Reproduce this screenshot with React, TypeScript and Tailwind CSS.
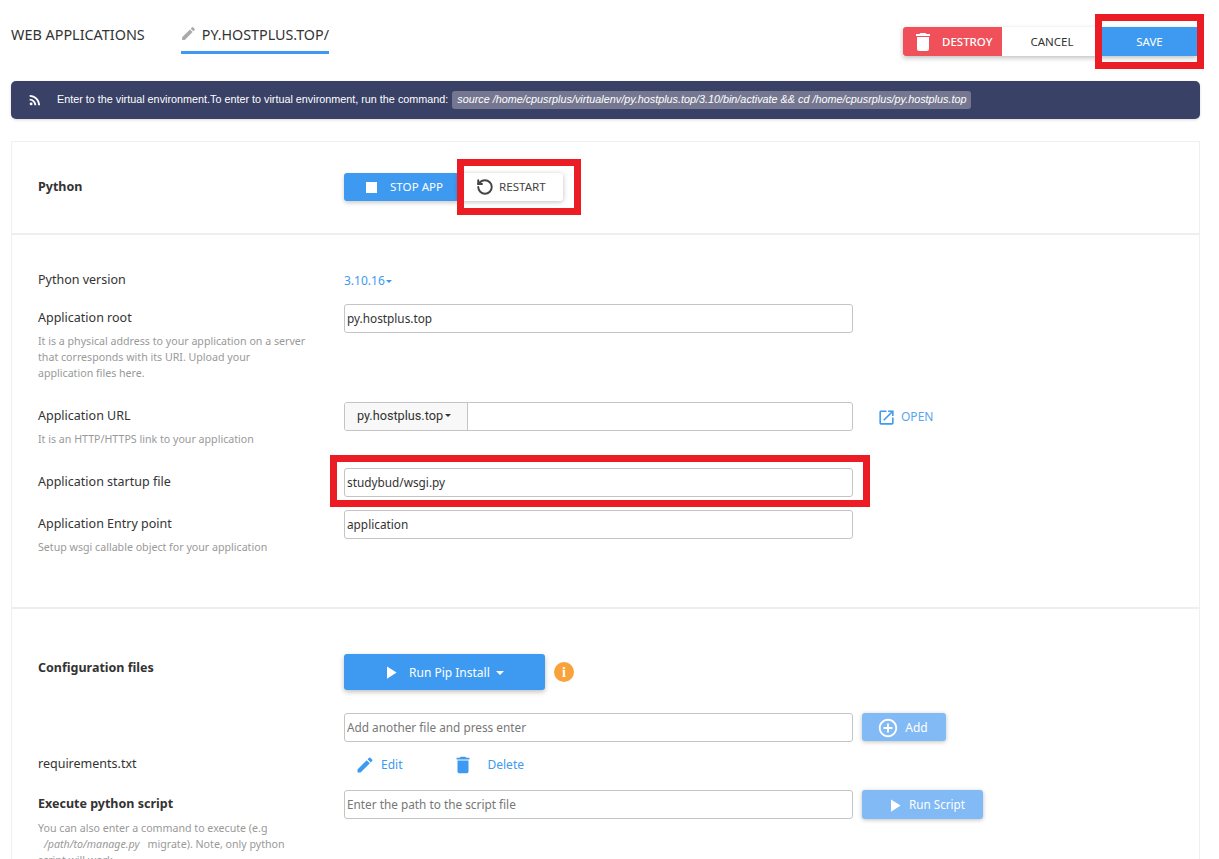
import { ReactNode } from 'react'
import { RotateCcw } from 'lucide-react'
import {
  MdAddCircleOutline,
  MdDelete,
  MdEdit,
  MdOpenInNew,
  MdPlayArrow,
  MdRssFeed,
} from 'react-icons/md'

const inputClass =
  'h-[29px] w-[509px] rounded-[3px] border border-[#c4c4c4] bg-white px-[2px] pb-px text-[11.8px] text-[#333] outline-none placeholder:text-[#777]'

// Red annotation frames that were drawn over the screenshot
function RedBox({ className }: { className: string }) {
  return <div className={`pointer-events-none absolute border-[7px] border-[#ec1c24] ${className}`} />
}

function Label({ children, bold }: { children: ReactNode; bold?: boolean }) {
  return <div className={`text-[12.5px] leading-[18px] text-[#333] ${bold ? 'font-bold' : ''}`}>{children}</div>
}

function Hint({ children }: { children: ReactNode }) {
  return <div className="mt-[6px] w-[274px] text-[10.65px] leading-[16px] text-[#999]">{children}</div>
}

export default function App() {
  return (
    <div className="relative h-[859px] overflow-hidden bg-white font-['Noto_Sans',sans-serif]">
      {/* Page header */}
      <div className="flex h-[81px] items-start pl-[11px] pr-[22px]">
        <div className="mt-[25px] text-[14.4px] leading-[20px] text-[#333]">WEB APPLICATIONS</div>
        <div className="ml-[36px] mt-[24px] flex h-[30px] w-[148px] items-start gap-[5px] border-b-[3px] border-[#3d9af0] pt-px text-[#333]">
          <MdEdit className="-ml-px size-[17px] shrink-0 text-[#aaa]" />
          <span className="whitespace-nowrap text-[14.3px] leading-[20px]">PY.HOSTPLUS.TOP/</span>
        </div>
        <div className="ml-auto mt-[27px] flex h-[29px] text-[11.5px] shadow-[0_2px_5px_rgba(0,0,0,0.25)]">
          <button className="flex w-[99px] items-center gap-[7px] rounded-l-[3px] bg-[#ef5059] pl-[8px] font-medium text-white">
            <MdDelete className="size-[24px]" />
            DESTROY
          </button>
          <button className="w-[100px] bg-white text-[#333]">CANCEL</button>
          <button className="w-[95px] bg-[#3d9af0] text-white">SAVE</button>
        </div>
      </div>

      {/* Virtual environment notice */}
      <div className="ml-[11px] mr-[19px] flex h-[38px] items-center rounded-[5px] bg-[#3a4166] pb-px font-['Liberation_Sans',sans-serif] text-[10.8px] text-white shadow-[0_1px_3px_rgba(0,0,0,0.15)]">
        <MdRssFeed className="ml-[16px] size-[16px]" />
        <span className="ml-[14px]">Enter to the virtual environment.To enter to virtual environment, run the command:</span>
        <code className="ml-[4px] flex h-[18px] items-center rounded-[3px] bg-[#74778f] px-[5px] font-['Liberation_Sans',sans-serif] text-[10.8px] italic">
          source /home/cpusrplus/virtualenv/py.hostplus.top/3.10/bin/activate &amp;&amp; cd /home/cpusrplus/py.hostplus.top
        </code>
      </div>

      {/* Application card */}
      <div className="ml-[11px] mr-[19px] mt-[22px] border border-b-0 border-[#f0f0f0]">
        <section className="flex h-[93px] border-b-2 border-[#eee] pl-[26px] pt-[31px]">
          <div className="w-[306px] pt-[5px]">
            <Label bold>Python</Label>
          </div>
          <div className="flex h-[28px] text-[11.6px]">
            <button className="flex w-[114px] items-center rounded-l-[3px] bg-[#3d9af0] pl-[22px] text-white shadow-[0_2px_4px_rgba(0,0,0,0.2)]">
              <span className="size-[11px] bg-white" />
              <span className="ml-[13px]">STOP APP</span>
            </button>
            <button className="flex w-[105px] items-center rounded-r-[3px] bg-white pl-[18px] text-[#444] shadow-[0_1px_5px_rgba(0,0,0,0.25)]">
              <RotateCcw className="size-[18px]" strokeWidth={2.6} />
              <span className="ml-[5px]">RESTART</span>
            </button>
          </div>
        </section>

        <section className="h-[374px] border-b-2 border-[#eee] pl-[26px] pt-[35px]">
          <div className="flex h-[34px]">
            <div className="w-[306px] pt-px">
              <Label>Python version</Label>
            </div>
            <div className="pt-[2px] text-[12px] leading-[18px] text-[#3d9af0]">
              3.10.16<span className="ml-px inline-block h-0 w-0 border-x-[3px] border-t-[3px] border-x-transparent border-t-[#3d9af0] align-middle" />
            </div>
          </div>
          <div className="flex h-[98px]">
            <div className="w-[306px] pt-[5px]">
              <Label>Application root</Label>
              <Hint>
                It is a physical address to your application on a server that corresponds with its URI. Upload your
                <br />
                application files here.
              </Hint>
            </div>
            <input className={inputClass} defaultValue="py.hostplus.top" />
          </div>
          <div className="flex h-[66px]">
            <div className="w-[306px] pt-[5px]">
              <Label>Application URL</Label>
              <Hint>It is an HTTP/HTTPS link to your application</Hint>
            </div>
            <div className="flex h-[29px] w-[509px] overflow-hidden rounded-[3px] border border-[#c4c4c4]">
              <div className="flex w-[123px] items-center justify-center border-r border-[#c4c4c4] bg-[#f8f8f8] pb-[2px] pr-[4px] font-['Roboto',sans-serif] text-[12.7px] text-[#333]">
                py.hostplus.top<span className="ml-[2px] h-0 w-0 border-x-[3px] border-t-[3px] border-x-transparent border-t-[#333]" />
              </div>
            </div>
            <div className="ml-[24px] flex h-[29px] items-center gap-[5px] pt-px text-[12px] text-[#5aa5ef]">
              <MdOpenInNew className="size-[19px] text-[#3d9af0]" />
              OPEN
            </div>
          </div>
          <div className="flex h-[42px]">
            <div className="w-[306px] pt-[5px]">
              <Label>Application startup file</Label>
            </div>
            <input className={inputClass} defaultValue="studybud/wsgi.py" />
          </div>
          <div className="flex">
            <div className="w-[306px] pt-[5px]">
              <Label>Application Entry point</Label>
              <Hint>Setup wsgi callable object for your application</Hint>
            </div>
            <input className={inputClass} defaultValue="application" />
          </div>
        </section>

        <section className="pl-[26px] pt-[45px]">
          <div className="flex h-[59px]">
            <div className="w-[306px] pt-[5px]">
              <Label bold>Configuration files</Label>
            </div>
            <button className="flex h-[36px] w-[201px] items-center rounded-[3px] bg-[#3d9af0] pl-[38px] pt-px text-[12px] text-white shadow-[0_2px_5px_rgba(0,0,0,0.25)]">
              <MdPlayArrow className="-ml-[2px] size-[21px]" />
              <span className="ml-[8px]">Run Pip Install</span>
              <span className="ml-[6px] h-0 w-0 border-x-[4px] border-t-[4px] border-x-transparent border-t-white" />
            </button>
            <div className="ml-[9px] mt-[8px] flex size-[20px] items-center justify-center rounded-full bg-[#f8a23b] font-['Liberation_Serif',serif] text-[14px] font-bold text-white">
              i
            </div>
          </div>
          <div className="flex h-[41px] pl-[306px]">
            <input className={`${inputClass} h-[28px]`} placeholder="Add another file and press enter" />
            <button className="ml-[9px] flex h-[28px] w-[84px] items-center justify-center gap-[6px] rounded-[3px] bg-[#81baf4] pr-[3px] pt-px text-[12px] text-white shadow-[0_1px_4px_rgba(0,0,0,0.25)]">
              <MdAddCircleOutline className="size-[22px]" />
              Add
            </button>
          </div>
          <div className="flex h-[36px] items-start">
            <div className="w-[306px] pt-px">
              <Label>requirements.txt</Label>
            </div>
            <div className="flex items-center pl-[11px] text-[12px] text-[#3d9af0]">
              <MdEdit className="size-[20px]" />
              <span className="ml-[6px]">Edit</span>
              <MdDelete className="ml-[50px] size-[22px]" />
              <span className="ml-[13px]">Delete</span>
            </div>
          </div>
          <div className="flex">
            <div className="w-[306px] pt-[5px]">
              <Label bold>Execute python script</Label>
              <div className="pt-px">
                <Hint>
                  You can also enter a command to execute (e.g
                  <br />
                  <i className="ml-[6px] mr-[8px]">/path/to/manage.py</i>migrate). Note, only python
                  <br />
                  script will work.
                </Hint>
              </div>
            </div>
            <input className={inputClass} placeholder="Enter the path to the script file" />
            <button className="ml-[9px] flex h-[29px] w-[121px] items-center rounded-[3px] bg-[#81baf4] pl-[22px] pt-px text-[11.7px] text-white shadow-[0_1px_4px_rgba(0,0,0,0.25)]">
              <MdPlayArrow className="size-[21px]" />
              <span className="ml-[4px]">Run Script</span>
            </button>
          </div>
        </section>
      </div>

      <RedBox className="left-[1095px] top-[14px] h-[55px] w-[109px]" />
      <RedBox className="left-[457px] top-[159px] h-[56px] w-[124px]" />
      <RedBox className="left-[330px] top-[455px] h-[52px] w-[540px]" />
    </div>
  )
}
